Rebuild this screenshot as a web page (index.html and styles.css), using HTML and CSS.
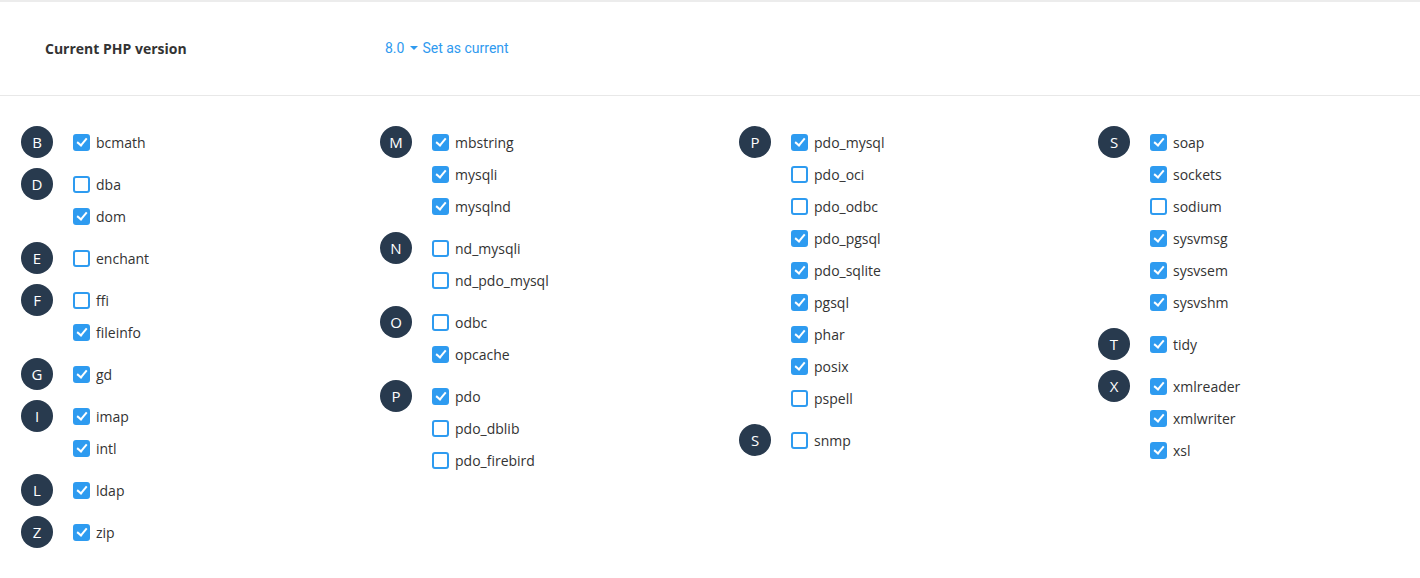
FILE: index.html
```html
<!DOCTYPE html>
<html>
<head>
<meta charset="utf-8">
<link rel="stylesheet" href="styles.css">
</head>
<body>
<div class="page">
  <div class="header">
    <div class="label">Current PHP version</div>
    <div class="version"><span>8.0</span><span class="caret"></span><span>Set as current</span></div>
  </div>
  <div class="grid">
    <div class="col">
      <div class="group"><div class="letter">B</div><div class="items">
        <div class="item"><span class="cb on"></span>bcmath</div>
      </div></div>
      <div class="group"><div class="letter">D</div><div class="items">
        <div class="item"><span class="cb"></span>dba</div>
        <div class="item"><span class="cb on"></span>dom</div>
      </div></div>
      <div class="group"><div class="letter">E</div><div class="items">
        <div class="item"><span class="cb"></span>enchant</div>
      </div></div>
      <div class="group"><div class="letter">F</div><div class="items">
        <div class="item"><span class="cb"></span>ffi</div>
        <div class="item"><span class="cb on"></span>fileinfo</div>
      </div></div>
      <div class="group"><div class="letter">G</div><div class="items">
        <div class="item"><span class="cb on"></span>gd</div>
      </div></div>
      <div class="group"><div class="letter">I</div><div class="items">
        <div class="item"><span class="cb on"></span>imap</div>
        <div class="item"><span class="cb on"></span>intl</div>
      </div></div>
      <div class="group"><div class="letter">L</div><div class="items">
        <div class="item"><span class="cb on"></span>ldap</div>
      </div></div>
      <div class="group"><div class="letter">Z</div><div class="items">
        <div class="item"><span class="cb on"></span>zip</div>
      </div></div>
    </div>
    <div class="col">
      <div class="group"><div class="letter">M</div><div class="items">
        <div class="item"><span class="cb on"></span>mbstring</div>
        <div class="item"><span class="cb on"></span>mysqli</div>
        <div class="item"><span class="cb on"></span>mysqlnd</div>
      </div></div>
      <div class="group"><div class="letter">N</div><div class="items">
        <div class="item"><span class="cb"></span>nd_mysqli</div>
        <div class="item"><span class="cb"></span>nd_pdo_mysql</div>
      </div></div>
      <div class="group"><div class="letter">O</div><div class="items">
        <div class="item"><span class="cb"></span>odbc</div>
        <div class="item"><span class="cb on"></span>opcache</div>
      </div></div>
      <div class="group"><div class="letter">P</div><div class="items">
        <div class="item"><span class="cb on"></span>pdo</div>
        <div class="item"><span class="cb"></span>pdo_dblib</div>
        <div class="item"><span class="cb"></span>pdo_firebird</div>
      </div></div>
    </div>
    <div class="col">
      <div class="group"><div class="letter">P</div><div class="items">
        <div class="item"><span class="cb on"></span>pdo_mysql</div>
        <div class="item"><span class="cb"></span>pdo_oci</div>
        <div class="item"><span class="cb"></span>pdo_odbc</div>
        <div class="item"><span class="cb on"></span>pdo_pgsql</div>
        <div class="item"><span class="cb on"></span>pdo_sqlite</div>
        <div class="item"><span class="cb on"></span>pgsql</div>
        <div class="item"><span class="cb on"></span>phar</div>
        <div class="item"><span class="cb on"></span>posix</div>
        <div class="item"><span class="cb"></span>pspell</div>
      </div></div>
      <div class="group"><div class="letter">S</div><div class="items">
        <div class="item"><span class="cb"></span>snmp</div>
      </div></div>
    </div>
    <div class="col">
      <div class="group"><div class="letter">S</div><div class="items">
        <div class="item"><span class="cb on"></span>soap</div>
        <div class="item"><span class="cb on"></span>sockets</div>
        <div class="item"><span class="cb"></span>sodium</div>
        <div class="item"><span class="cb on"></span>sysvmsg</div>
        <div class="item"><span class="cb on"></span>sysvsem</div>
        <div class="item"><span class="cb on"></span>sysvshm</div>
      </div></div>
      <div class="group"><div class="letter">T</div><div class="items">
        <div class="item"><span class="cb on"></span>tidy</div>
      </div></div>
      <div class="group"><div class="letter">X</div><div class="items">
        <div class="item"><span class="cb on"></span>xmlreader</div>
        <div class="item"><span class="cb on"></span>xmlwriter</div>
        <div class="item"><span class="cb on"></span>xsl</div>
      </div></div>
    </div>
  </div>
</div>
</body>
</html>
```
FILE: styles.css
```css
html, body {
  margin: 0;
  padding: 0;
  background: #fff;
}
body {
  font-family: "Open Sans", "Liberation Sans", sans-serif;
  font-size: 14px;
  color: #333;
}
.page {
  border-top: 2px solid #ececec;
  margin-top: 0;
}
.header {
  display: flex;
  align-items: center;
  height: 93px;
  border-bottom: 1px solid #e8e8e8;
  padding-left: 45px;
}
.label {
  font-weight: 700;
  width: 340px;
  color: #333;
}
.version {
  display: flex;
  align-items: center;
  font-family: Roboto, "Liberation Sans", sans-serif;
  color: #2f9aef;
  font-size: 14px;
  position: relative;
  top: -1px;
}
.caret {
  display: inline-block;
  width: 0;
  height: 0;
  border-left: 4px solid transparent;
  border-right: 4px solid transparent;
  border-top: 4px solid #2f9aef;
  margin: 0 4px 0 6px;
}
.grid {
  display: grid;
  grid-template-columns: repeat(4, 359px);
  padding: 30px 0 0 21px;
}
.group {
  display: flex;
  margin-bottom: 10px;
}
.letter {
  width: 32px;
  height: 32px;
  border-radius: 50%;
  background: #283a4e;
  color: #fff;
  display: flex;
  align-items: center;
  justify-content: center;
  font-size: 15px;
  margin-right: 20px;
  flex-shrink: 0;
}
.items {
  display: flex;
  flex-direction: column;
}
.item {
  height: 32px;
  display: flex;
  align-items: center;
  color: #333;
}
.cb {
  box-sizing: border-box;
  width: 17px;
  height: 17px;
  border: 2px solid #2e9bf0;
  border-radius: 3px;
  margin-right: 6px;
  position: relative;
}
.cb.on {
  background: #2e9bf0;
}
.cb.on::after {
  content: "";
  position: absolute;
  left: 4px;
  top: 0px;
  width: 4px;
  height: 8px;
  border-right: 2px solid #fff;
  border-bottom: 2px solid #fff;
  transform: rotate(40deg);
}
```
